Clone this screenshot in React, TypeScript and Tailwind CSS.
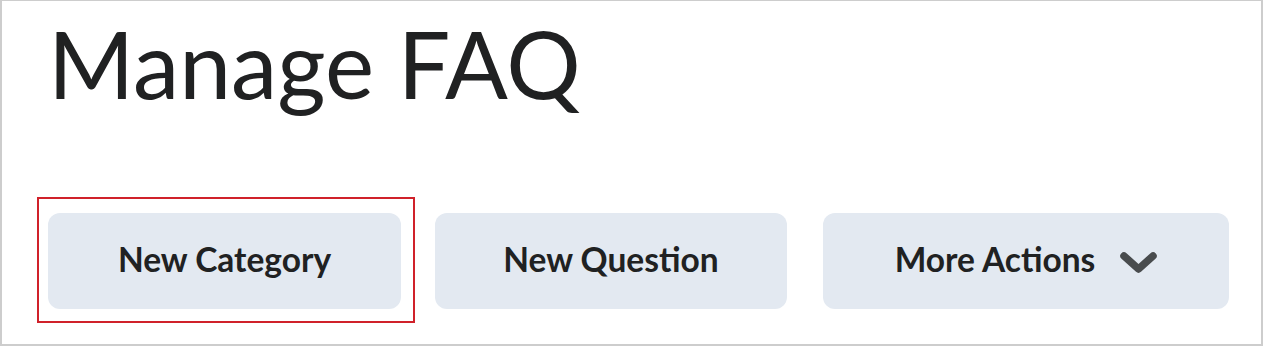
function ActionButton({ label, width, chevron }: { label: string; width: string; chevron?: boolean }) {
  return (
    <button
      type="button"
      className={`${width} flex h-[96px] items-center justify-center gap-[25px] rounded-[12px] bg-[#e3e9f1] pb-[4px] text-[33.5px] font-bold text-[#202122]`}
    >
      <span>{label}</span>
      {chevron ? (
        <svg width="37" height="21" viewBox="0 0 37 21" className="mt-[6px]">
          <path
            d="M4 4 L18.5 17 L33 4"
            fill="none"
            stroke="#494c4e"
            strokeWidth="7.5"
            strokeLinecap="round"
            strokeLinejoin="round"
          />
        </svg>
      ) : null}
    </button>
  );
}

export default function App() {
  return (
    <div
      className="h-[346px] w-[1263px] overflow-hidden bg-white"
      style={{ fontFamily: "Lato, 'Noto Sans', sans-serif" }}
    >
      <div className="box-border h-full w-full border-x-2 border-t border-b-2 border-[#cdcdcd] px-[46px]">
        <h1 className="pt-[16px] text-[93px] leading-none font-normal text-[#202122]">Manage FAQ</h1>

        <div className="mt-[103px] flex items-start">
          <div className="relative">
            <ActionButton label="New Category" width="w-[353px]" />
            <div className="pointer-events-none absolute -top-[16px] -left-[11px] -right-[14px] -bottom-[14px] border-2 border-[#d0212a]" />
          </div>
          <div className="ml-[34px]">
            <ActionButton label="New Question" width="w-[352px]" />
          </div>
          <div className="ml-[36px]">
            <ActionButton label="More Actions" width="w-[406px]" chevron />
          </div>
        </div>
      </div>
    </div>
  );
}
